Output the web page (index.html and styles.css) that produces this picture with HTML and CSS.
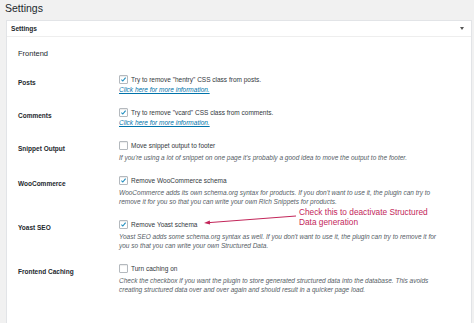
FILE: index.html
```html
<!DOCTYPE html>
<html lang="en">
<head>
<meta charset="utf-8">
<title>Settings</title>
<link rel="stylesheet" href="styles.css">
</head>
<body>
<h1 class="page-title">Settings</h1>
<div class="panel">
  <div class="panel-header">
    <span>Settings</span>
    <svg class="toggle" width="4" height="3" viewBox="0 0 4 3"><path d="M0 0H4L2 3Z" fill="#555"/></svg>
  </div>
  <div class="panel-body">
    <h2 class="section">Frontend</h2>
    <div class="row">
      <div class="label">Posts</div>
      <div class="field">
        <div class="opt"><span class="cb checked"><svg viewBox="0 0 8 8"><path d="M1.6 4.2L3.2 5.8L6.4 1.8" fill="none" stroke="#1e8cbe" stroke-width="1.2"/></svg></span>Try to remove "hentry" CSS class from posts.</div>
        <a class="link" href="#">Click here for more information.</a>
      </div>
    </div>
    <div class="row">
      <div class="label">Comments</div>
      <div class="field">
        <div class="opt"><span class="cb checked"><svg viewBox="0 0 8 8"><path d="M1.6 4.2L3.2 5.8L6.4 1.8" fill="none" stroke="#1e8cbe" stroke-width="1.2"/></svg></span>Try to remove "vcard" CSS class from comments.</div>
        <a class="link" href="#">Click here for more information.</a>
      </div>
    </div>
    <div class="row">
      <div class="label">Snippet Output</div>
      <div class="field">
        <div class="opt"><span class="cb"></span>Move snippet output to footer</div>
        <p class="desc">If you're using a lot of snippet on one page it's probably a good idea to move the output to the footer.</p>
      </div>
    </div>
    <div class="row">
      <div class="label">WooCommerce</div>
      <div class="field">
        <div class="opt"><span class="cb checked"><svg viewBox="0 0 8 8"><path d="M1.6 4.2L3.2 5.8L6.4 1.8" fill="none" stroke="#1e8cbe" stroke-width="1.2"/></svg></span>Remove WooCommerce schema</div>
        <p class="desc">WooCommerce adds its own schema.org syntax for products. If you don't want to use it, the plugin can try to<br>remove it for you so that you can write your own Rich Snippets for products.</p>
      </div>
    </div>
    <div class="row">
      <div class="label">Yoast SEO</div>
      <div class="field">
        <div class="opt"><span class="cb checked"><svg viewBox="0 0 8 8"><path d="M1.6 4.2L3.2 5.8L6.4 1.8" fill="none" stroke="#1e8cbe" stroke-width="1.2"/></svg></span>Remove Yoast schema</div>
        <p class="desc">Yoast SEO adds some schema.org syntax as well. If you don't want to use it, the plugin can try to remove it for<br>you so that you can write your own Structured Data.</p>
      </div>
    </div>
    <div class="row">
      <div class="label">Frontend Caching</div>
      <div class="field">
        <div class="opt"><span class="cb"></span>Turn caching on</div>
        <p class="desc">Check the checkbox if you want the plugin to store generated structured data into the database. This avoids<br>creating structured data over and over again and should result in a quicker page load.</p>
      </div>
    </div>
  </div>
  <div class="note">Check this to deactivate Structured<br>Data generation</div>
  <svg class="arrow" width="100" height="14" viewBox="0 0 100 14"><line x1="8" y1="10.7" x2="96" y2="4" stroke="#c3265a" stroke-width="1"/><polygon points="4,11 10.1,12.6 9.8,8.5" fill="#c3265a"/></svg>
</div>
</body>
</html>
```

FILE: styles.css
```css
html, body {
  margin: 0;
  padding: 0;
}
body {
  background: #f1f1f1;
  font-family: "Liberation Sans", Arial, sans-serif;
  color: #23282d;
  height: 323px;
  overflow: hidden;
}
.page-title {
  margin: 0;
  padding: 1px 5px 0;
  font-size: 10.5px;
  font-weight: 400;
  line-height: 14px;
  height: 19px;
  box-sizing: border-box;
}
.panel {
  position: relative;
  margin: 1px 2px 0 6px;
  background: #fff;
  border: 1px solid #e2e4e7;
  border-bottom: 0;
  height: 303px;
  box-sizing: border-box;
  overflow: hidden;
}
.panel-header {
  display: flex;
  align-items: center;
  justify-content: space-between;
  height: 15px;
  padding: 0 7px 0 4px;
  border-bottom: 1px solid #eeeeee;
  font-size: 6.6px;
  font-weight: 700;
}
.toggle {
  display: block;
}
.panel-body {
  padding: 0 11px;
}
.section {
  margin: 12px 0 9.5px;
  font-size: 7.5px;
  font-weight: 400;
  line-height: 9px;
}
.row {
  display: grid;
  grid-template-columns: 101px 1fr;
  padding: 6.5px 0;
}
.label {
  font-size: 6.5px;
  font-weight: 700;
  line-height: 11px;
  padding-top: 2.5px;
}
.field {
  font-size: 6.5px;
  color: #32373c;
}
.opt {
  display: flex;
  align-items: center;
  height: 11px;
  line-height: 11px;
}
.cb {
  width: 7px;
  height: 7px;
  border: 1px solid #b4b9be;
  border-radius: 1px;
  background: #fff;
  box-shadow: inset 0 1px 1px rgba(0,0,0,0.08);
  margin-right: 3px;
  display: flex;
  align-items: center;
  justify-content: center;
  box-sizing: content-box;
  flex: none;
}
.cb svg {
  width: 7px;
  height: 7px;
  display: block;
}
.link {
  display: block;
  color: #0073aa;
  font-style: italic;
  text-decoration: underline;
  line-height: 9px;
}
.desc {
  margin: 2px 0 0;
  font-style: italic;
  color: #555d66;
  line-height: 9px;
}
.note {
  position: absolute;
  left: 292px;
  top: 186px;
  font-size: 8.3px;
  line-height: 10px;
  color: #c3265a;
  white-space: nowrap;
}
.arrow {
  position: absolute;
  left: 193px;
  top: 191px;
}
```
